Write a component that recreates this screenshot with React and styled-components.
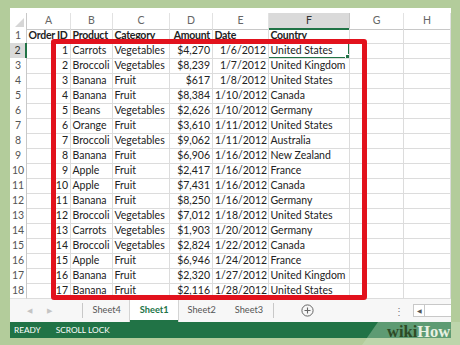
import React from "react"
import styled, { createGlobalStyle } from "styled-components"

const GlobalStyle = createGlobalStyle`
  html, body {
    margin: 0;
    padding: 0;
    background: #b3cc9b;
  }
  body {
    font-family: "Lato", "Liberation Sans", sans-serif;
  }
`

const COLS = "17px 44px 42px 57px 43px 56px 81px 54px 47px"
const GREEN = "#217346"

const rows = [
  [1, "Carrots", "Vegetables", "$4,270", "1/6/2012", "United States"],
  [2, "Broccoli", "Vegetables", "$8,239", "1/7/2012", "United Kingdom"],
  [3, "Banana", "Fruit", "$617", "1/8/2012", "United States"],
  [4, "Banana", "Fruit", "$8,384", "1/10/2012", "Canada"],
  [5, "Beans", "Vegetables", "$2,626", "1/10/2012", "Germany"],
  [6, "Orange", "Fruit", "$3,610", "1/11/2012", "United States"],
  [7, "Broccoli", "Vegetables", "$9,062", "1/11/2012", "Australia"],
  [8, "Banana", "Fruit", "$6,906", "1/16/2012", "New Zealand"],
  [9, "Apple", "Fruit", "$2,417", "1/16/2012", "France"],
  [10, "Apple", "Fruit", "$7,431", "1/16/2012", "Canada"],
  [11, "Banana", "Fruit", "$8,250", "1/16/2012", "Germany"],
  [12, "Broccoli", "Vegetables", "$7,012", "1/18/2012", "United States"],
  [13, "Carrots", "Vegetables", "$1,903", "1/20/2012", "Germany"],
  [14, "Broccoli", "Vegetables", "$2,824", "1/22/2012", "Canada"],
  [15, "Apple", "Fruit", "$6,946", "1/24/2012", "France"],
  [16, "Banana", "Fruit", "$2,320", "1/27/2012", "United Kingdom"],
  [17, "Banana", "Fruit", "$2,116", "1/28/2012", "United States"],
]

const Page = styled.div`
  width: 460px;
  height: 345px;
  padding: 8px 9px 7px 10px;
  box-sizing: border-box;
  position: relative;
  overflow: hidden;
`

const Window = styled.div`
  background: #fff;
  display: flex;
  flex-direction: column;
  position: relative;
`

const Sheet = styled.div`
  position: relative;
  padding-top: 5px;
`

const Row = styled.div`
  display: grid;
  grid-template-columns: ${COLS};
  height: 15px;
`

const ColHead = styled.div`
  font-size: 10.5px;
  text-align: center;
  line-height: 15px;
  border-right: 1px solid ${(p) => (p.$sel ? "#c6c6c6" : "#e2e2e2")};
  border-bottom: ${(p) => (p.$sel ? `2px solid ${GREEN}` : "1px solid #c8c8c8")};
  background: ${(p) => (p.$sel ? "#dadada" : "#fff")};
  box-sizing: border-box;
  color: ${(p) => (p.$sel ? "#333" : "#666")};
`

const Corner = styled.div`
  border-right: 1px solid #c8c8c8;
  border-bottom: 1px solid #c8c8c8;
  box-sizing: border-box;
  display: flex;
  justify-content: flex-end;
  align-items: flex-end;
  padding: 0 2px 2px 0;
  &::after {
    content: "";
    width: 0;
    height: 0;
    border-left: 9px solid transparent;
    border-bottom: 9px solid #d6d6d6;
  }
`

const RowHead = styled.div`
  font-size: 10.5px;
  text-align: center;
  line-height: 15px;
  box-sizing: border-box;
  border-right: ${(p) => (p.$sel ? `2px solid ${GREEN}` : "1px solid #c8c8c8")};
  border-bottom: 1px solid #e2e2e2;
  background: ${(p) => (p.$sel ? "#dadada" : "#fff")};
  color: ${(p) => (p.$sel ? "#333" : "#555")};
`

const Cell = styled.div`
  font-size: 10.5px;
  line-height: 15px;
  color: #222;
  white-space: nowrap;
  overflow: ${(p) => (p.$spill ? "visible" : "hidden")};
  text-align: ${(p) => (p.$right ? "right" : "left")};
  font-weight: ${(p) => (p.$bold ? 700 : 400)};
  letter-spacing: ${(p) => (p.$bold ? "-0.25px" : "0")};
  padding: 0 ${(p) => (p.$right ? 2 : 1.5)}px;
  border-right: 1px solid #dcdcdc;
  border-bottom: 1px solid #dcdcdc;
  box-sizing: border-box;
  position: relative;
  z-index: ${(p) => (p.$spill ? 1 : 0)};
`

const Selected = styled.div`
  position: absolute;
  inset: -1px -1px -1px -2px;
  border: 2px solid ${GREEN};
  pointer-events: none;
  &::after {
    content: "";
    position: absolute;
    right: -4px;
    bottom: -4px;
    width: 5px;
    height: 5px;
    background: ${GREEN};
    border: 1px solid #fff;
  }
`

const RedBox = styled.div`
  position: absolute;
  left: 41px;
  top: 31px;
  width: 316px;
  height: 261px;
  border: 5px solid #e2121d;
  border-radius: 3px;
  box-sizing: border-box;
  z-index: 3;
`

const TabBar = styled.div`
  height: 24px;
  background: #f7f7f7;
  border-top: 1px solid #dcdcdc;
  box-sizing: border-box;
  display: flex;
  align-items: stretch;
  font-size: 9.2px;
  color: #444;
`

const Arrows = styled.div`
  width: 73px;
  display: flex;
  align-items: center;
  padding-left: 17px;
  gap: 15px;
  color: #c4c4c4;
  font-size: 7px;
  box-sizing: border-box;
  border-right: 1px solid #c8c8c8;
  margin: 4px 0;
`

const Tab = styled.div`
  padding: 0 9.5px;
  display: flex;
  align-items: center;
  background: ${(p) => (p.$active ? "#fff" : "transparent")};
  color: ${(p) => (p.$active ? GREEN : "#555")};
  font-weight: ${(p) => (p.$active ? 700 : 400)};
  border-bottom: ${(p) => (p.$active ? `2px solid ${GREEN}` : "2px solid transparent")};
  box-shadow: ${(p) => (p.$active ? "1px 0 0 #d4d4d4, -1px 0 0 #d4d4d4" : "none")};
`

const TabSep = styled.div`
  width: 1px;
  background: #c8c8c8;
  margin: 4px 0;
`

const AddBtn = styled.div`
  margin-left: 27px;
  display: flex;
  align-items: center;
`

const TabFill = styled.div`
  flex: 1;
`

const Dots = styled.div`
  display: flex;
  align-items: center;
  color: #777;
  font-size: 10px;
  margin-right: 9px;
`

const HScroll = styled.div`
  width: 37px;
  margin: 5px 0;
  border: 1px solid #c8c8c8;
  border-right: none;
  background: #fff;
  display: flex;
`

const ScrollBtn = styled.div`
  width: 10px;
  border-right: 1px solid #c8c8c8;
  display: flex;
  align-items: center;
  justify-content: center;
  font-size: 6px;
  color: #555;
`

const StatusBar = styled.div`
  height: 16px;
  background: ${GREEN};
  display: flex;
  align-items: center;
  gap: 15px;
  padding-left: 4px;
  color: #fff;
  font-size: 8.3px;
`

const Watermark = styled.div`
  position: absolute;
  left: 362px;
  right: 0;
  top: 322px;
  bottom: 0;
  background: rgba(210, 230, 200, 0.35);
  clip-path: polygon(16px 0, 100% 0, 100% 100%, 0 100%);
  z-index: 4;
`

const Logo = styled.div`
  position: absolute;
  left: 387px;
  bottom: 5px;
  font-family: "Liberation Serif", "DejaVu Serif", serif;
  font-weight: 700;
  font-size: 16.5px;
  line-height: 17px;
  z-index: 5;
  white-space: nowrap;
`

const Wiki = styled.span`
  color: #2e4a25;
`

const How = styled.span`
  color: #e9f1e2;
`

const PlusIcon = () => (
  <svg width="13" height="13" viewBox="0 0 13 13">
    <circle cx="6.5" cy="6.5" r="5.6" fill="none" stroke="#666" strokeWidth="1" />
    <path d="M6.5 3.5v6M3.5 6.5h6" stroke="#666" strokeWidth="1.1" />
  </svg>
)

const letters = ["A", "B", "C", "D", "E", "F", "G", "H"]

export default function App() {
  return (
    <>
      <GlobalStyle />
      <Page>
        <Window>
          <Sheet>
            <Row>
              <Corner />
              {letters.map((l) => (
                <ColHead key={l} $sel={l === "F"}>
                  {l}
                </ColHead>
              ))}
            </Row>
            <Row>
              <RowHead>1</RowHead>
              <Cell $bold $spill>Order ID</Cell>
              <Cell $bold $spill>Product</Cell>
              <Cell $bold>Category</Cell>
              <Cell $bold $right>Amount</Cell>
              <Cell $bold>Date</Cell>
              <Cell $bold>Country</Cell>
              <Cell />
              <Cell />
            </Row>
            {rows.map((r, i) => (
              <Row key={r[0]}>
                <RowHead $sel={i === 0}>{i + 2}</RowHead>
                <Cell $right>{r[0]}</Cell>
                <Cell $spill>{r[1]}</Cell>
                <Cell>{r[2]}</Cell>
                <Cell $right>{r[3]}</Cell>
                <Cell $right>{r[4]}</Cell>
                <Cell>
                  {r[5]}
                  {i === 0 && <Selected />}
                </Cell>
                <Cell />
                <Cell />
              </Row>
            ))}
            <RedBox />
          </Sheet>
          <TabBar>
            <Arrows>
              <span>◀</span>
              <span>▶</span>
            </Arrows>
            <Tab>Sheet4</Tab>
            <Tab $active>Sheet1</Tab>
            <Tab>Sheet2</Tab>
            <Tab>Sheet3</Tab>
            <TabSep />
            <AddBtn>
              <PlusIcon />
            </AddBtn>
            <TabFill />
            <Dots>⋮</Dots>
            <HScroll>
              <ScrollBtn>◀</ScrollBtn>
            </HScroll>
          </TabBar>
          <StatusBar>
            <span>READY</span>
            <span>SCROLL LOCK</span>
          </StatusBar>
        </Window>
        <Watermark />
        <Logo>
          <Wiki>wiki</Wiki>
          <How>How</How>
        </Logo>
      </Page>
    </>
  )
}
